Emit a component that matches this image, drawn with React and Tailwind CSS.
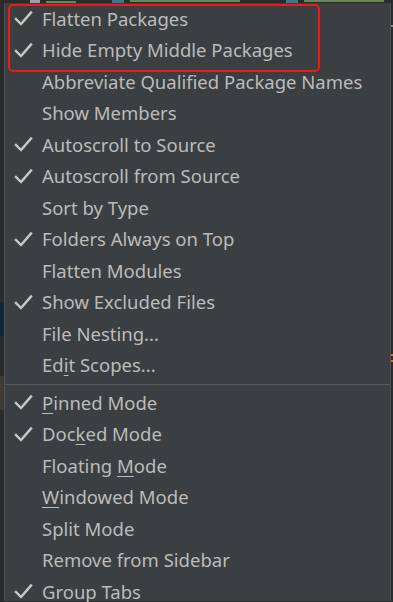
import React from 'react';

const Check = () => (
  <svg width="19" height="17" viewBox="0 0 19 17" className="shrink-0">
    <path d="M2 9 L7 14 L17 2.5" fill="none" stroke="#c8c8c8" strokeWidth="2.4" strokeLinecap="square" />
  </svg>
);

const items = [
  { label: 'Flatten Packages', checked: true },
  { label: 'Hide Empty Middle Packages', checked: true },
  { label: 'Abbreviate Qualified Package Names' },
  { label: 'Show Members' },
  { label: 'Autoscroll to Source', checked: true },
  { label: 'Autoscroll from Source', checked: true },
  { label: 'Sort by Type' },
  { label: 'Folders Always on Top', checked: true },
  { label: 'Flatten Modules' },
  { label: 'Show Excluded Files', checked: true },
  { label: 'File Nesting...' },
  { label: 'Edit Scopes...', u: 2 },
];

const modes = [
  { label: 'Pinned Mode', checked: true, u: 0 },
  { label: 'Docked Mode', checked: true, u: 3 },
  { label: 'Floating Mode', u: 9 },
  { label: 'Windowed Mode', u: 0 },
  { label: 'Split Mode' },
  { label: 'Remove from Sidebar' },
  { label: 'Group Tabs', checked: true },
];

const Label = ({ text, u }) => {
  if (u === undefined) return <span>{text}</span>;
  return (
    <span>
      {text.slice(0, u)}
      <span className="underline underline-offset-[3px] decoration-1">{text[u]}</span>
      {text.slice(u + 1)}
    </span>
  );
};

const Row = ({ item }) => (
  <div className="h-[31.5px] flex items-center">
    <div className="w-[37px] pl-[9px] flex items-center">{item.checked && <Check />}</div>
    <Label text={item.label} u={item.u} />
  </div>
);

export default function App() {
  return (
    <div className="w-[393px] h-[602px] overflow-hidden bg-[#2b2b2b] relative" style={{ fontFamily: '"Noto Sans", "Open Sans", sans-serif' }}>
      {/* editor peeking out behind the popup */}
      <div className="h-[4px] flex items-start gap-[6px] pl-[30px]">
        <div className="w-[10px] h-[3px] bg-[#9aa2aa]" />
        <div className="w-[30px] h-[2px] bg-[#6a8759] mt-[1px]" />
        <div className="w-[12px] h-[3px] bg-[#3b7a8c] ml-[30px]" />
        <div className="w-[110px] h-[2px] bg-[#6a8759]" />
        <div className="w-[12px] h-[3px] bg-[#3b7a8c] ml-[40px]" />
        <div className="w-[80px] h-[2px] bg-[#6a8759]" />
      </div>
      <div className="absolute left-0 top-[303px] w-[4px] h-[33px] bg-[#0d293e]" />
      <div className="absolute left-0 top-[376px] w-[4px] h-[34px] bg-[#3f3d33]" />
      <div className="absolute right-0 top-[25px] w-[2px] h-[2px] bg-[#8a8a8a]" />
      <div className="absolute right-0 top-[354px] w-[2px] h-[2px] bg-[#cc7832]" />
      <div className="absolute right-0 top-[360px] w-[2px] h-[2px] bg-[#cc7832]" />

      <div className="ml-[4px] mr-[2px] h-[598px] bg-[#3c3f41] border-l border-r border-[#4d5052] text-[#bbbbbb] text-[18.5px] leading-none relative">
        <div className="-mt-[1px]">
          {items.map((it) => (
            <Row key={it.label} item={it} />
          ))}
        </div>
        <div className="h-[6px] flex items-center">
          <div className="w-full h-px bg-[#555759]" />
        </div>
        {modes.map((it) => (
          <Row key={it.label} item={it} />
        ))}
        <div className="absolute left-[3px] top-[1px] w-[312px] h-[68px] border-2 border-[#f01818] rounded-[5px]" />
      </div>
    </div>
  );
}
